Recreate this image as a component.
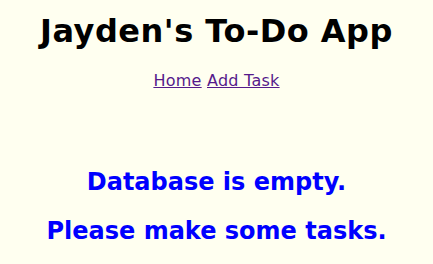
import React from "react";

export default function App() {
  return (
    <div
      className="min-h-screen bg-[#fffff0] text-center text-black"
      style={{ fontFamily: '"DejaVu Sans", Verdana, sans-serif' }}
    >
      <h1 className="pt-[13px] text-[32px] font-bold leading-[37px] tracking-[0.5px]">Jayden's To-Do App</h1>
      <nav className="mt-[21px] text-[16px] leading-[19px] tracking-[0.25px]">
        <a href="#" className="text-[#551a8b] underline">Home</a>{" "}
        <a href="#" className="text-[#551a8b] underline">Add Task</a>
      </nav>
      <h2 className="mt-[78px] text-[24px] font-bold leading-[28px] text-[#0000ff]">Database is empty.</h2>
      <h2 className="mt-[21px] text-[24px] font-bold leading-[28px] text-[#0000ff]">Please make some tasks.</h2>
    </div>
  );
}
